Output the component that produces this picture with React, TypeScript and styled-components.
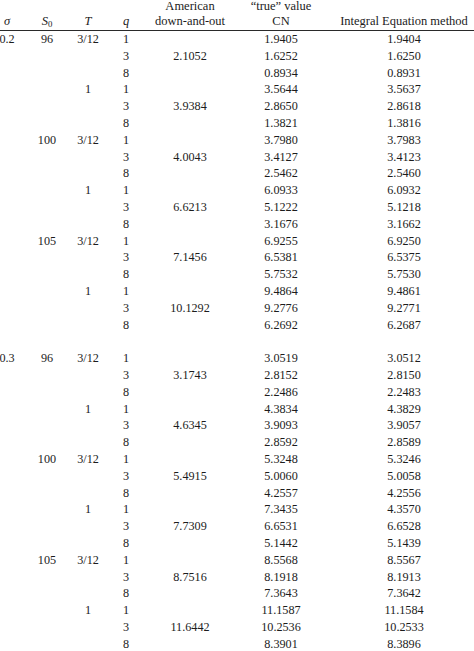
import React from 'react';
import styled, { createGlobalStyle } from 'styled-components';

const GlobalStyle = createGlobalStyle`
    html, body {
        margin: 0;
        padding: 0;
        background: #ffffff;
        overflow: hidden;
    }
    body {
        font-family: "Liberation Serif", "Times New Roman", serif;
        color: #1c1c1c;
    }
`;

const COLS = '34px 46px 36px 40px 88px 94px 152px';

const StyledPage = styled.div`
    width: 490px;
    margin-left: -10px;
`;

const StyledHeadRow = styled.div<{ $h: number }>`
    display: grid;
    grid-template-columns: ${COLS};
    height: ${p => p.$h}px;
    font-size: 12.5px;
    line-height: ${p => p.$h}px;
    text-align: center;
    white-space: nowrap;
`;

const StyledRule = styled.div`
    height: 1px;
    background: #2a2a2a;
`;

const StyledBody = styled.div`
    display: grid;
    grid-template-columns: ${COLS};
    grid-auto-rows: 16.8px;
    font-size: 12.2px;
    line-height: 16.8px;
    text-align: center;
    white-space: nowrap;
`;

const StyledMath = styled.span`
    font-style: italic;
    sub {
        font-style: normal;
        font-size: 0.7em;
        vertical-align: -0.25em;
        line-height: 0;
    }
`;

const StyledGap = styled.div`
    grid-column: 1 / -1;
`;

type Row = [string, string, string, string, string, string, string];

const block1: Row[] = [
    ['0.2', '96', '3/12', '1', '', '1.9405', '1.9404'],
    ['', '', '', '3', '2.1052', '1.6252', '1.6250'],
    ['', '', '', '8', '', '0.8934', '0.8931'],
    ['', '', '1', '1', '', '3.5644', '3.5637'],
    ['', '', '', '3', '3.9384', '2.8650', '2.8618'],
    ['', '', '', '8', '', '1.3821', '1.3816'],
    ['', '100', '3/12', '1', '', '3.7980', '3.7983'],
    ['', '', '', '3', '4.0043', '3.4127', '3.4123'],
    ['', '', '', '8', '', '2.5462', '2.5460'],
    ['', '', '1', '1', '', '6.0933', '6.0932'],
    ['', '', '', '3', '6.6213', '5.1222', '5.1218'],
    ['', '', '', '8', '', '3.1676', '3.1662'],
    ['', '105', '3/12', '1', '', '6.9255', '6.9250'],
    ['', '', '', '3', '7.1456', '6.5381', '6.5375'],
    ['', '', '', '8', '', '5.7532', '5.7530'],
    ['', '', '1', '1', '', '9.4864', '9.4861'],
    ['', '', '', '3', '10.1292', '9.2776', '9.2771'],
    ['', '', '', '8', '', '6.2692', '6.2687'],
];

const block2: Row[] = [
    ['0.3', '96', '3/12', '1', '', '3.0519', '3.0512'],
    ['', '', '', '3', '3.1743', '2.8152', '2.8150'],
    ['', '', '', '8', '', '2.2486', '2.2483'],
    ['', '', '1', '1', '', '4.3834', '4.3829'],
    ['', '', '', '3', '4.6345', '3.9093', '3.9057'],
    ['', '', '', '8', '', '2.8592', '2.8589'],
    ['', '100', '3/12', '1', '', '5.3248', '5.3246'],
    ['', '', '', '3', '5.4915', '5.0060', '5.0058'],
    ['', '', '', '8', '', '4.2557', '4.2556'],
    ['', '', '1', '1', '', '7.3435', '4.3570'],
    ['', '', '', '3', '7.7309', '6.6531', '6.6528'],
    ['', '', '', '8', '', '5.1442', '5.1439'],
    ['', '105', '3/12', '1', '', '8.5568', '8.5567'],
    ['', '', '', '3', '8.7516', '8.1918', '8.1913'],
    ['', '', '', '8', '', '7.3643', '7.3642'],
    ['', '', '1', '1', '', '11.1587', '11.1584'],
    ['', '', '', '3', '11.6442', '10.2536', '10.2533'],
    ['', '', '', '8', '', '8.3901', '8.3896'],
];

const renderRows = (rows: Row[], key: string) =>
    rows.map((row, i) =>
        row.map((cell, j) => <div key={`${key}-${i}-${j}`}>{cell}</div>)
    );

const App = () => {
    return (
        <StyledPage>
            <GlobalStyle />
            <StyledHeadRow $h={13}>
                <div />
                <div />
                <div />
                <div />
                <div>American</div>
                <div>&ldquo;true&rdquo; value</div>
                <div />
            </StyledHeadRow>
            <StyledHeadRow $h={17}>
                <div><StyledMath>σ</StyledMath></div>
                <div><StyledMath>S<sub>0</sub></StyledMath></div>
                <div><StyledMath>T</StyledMath></div>
                <div><StyledMath>q</StyledMath></div>
                <div>down-and-out</div>
                <div>CN</div>
                <div>Integral Equation method</div>
            </StyledHeadRow>
            <StyledRule />
            <StyledBody>
                {renderRows(block1, 'a')}
                <StyledGap />
                {renderRows(block2, 'b')}
            </StyledBody>
        </StyledPage>
    );
};

export default App;
